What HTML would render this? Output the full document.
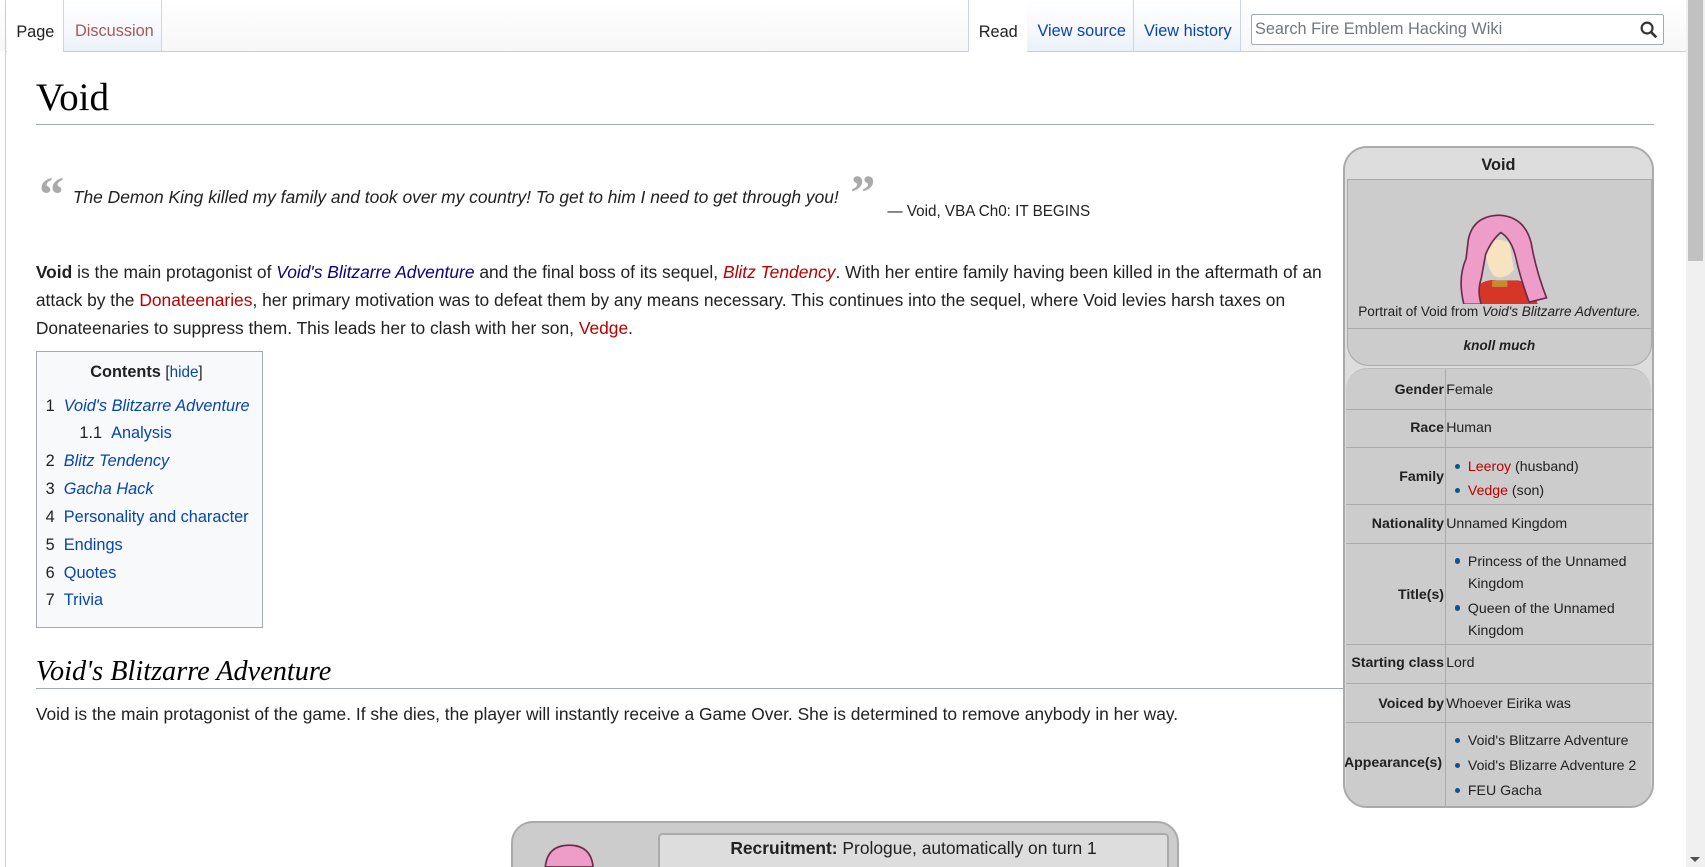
<!DOCTYPE html>
<html><head><meta charset="utf-8"><style>
html,body{margin:0;padding:0;background:#fff;overflow:hidden;width:1705px;height:867px}
#w{zoom:1.0875;position:relative;width:1568px;height:797px;font-family:"Liberation Sans",Arial,sans-serif;color:#202122}
.a{position:absolute;white-space:nowrap}
a{color:#0645ad;text-decoration:none}
.red{color:#ba0000}
.tab{position:absolute;top:0;height:47px;font-size:15px;background:linear-gradient(#fff,#f6f8fb 60%,#eaf1fa);border-right:1px solid #c8d6e8}
.tab span{position:absolute;bottom:9px}
.ib{position:absolute;font-size:13px}
.row{position:absolute;left:0;width:281px;border-top:1px solid #aaa}
.lab{position:absolute;left:0;width:90px;text-align:right;font-weight:bold}
.val{position:absolute;left:92px}
.vline{position:absolute;left:91px;top:0;bottom:0;border-left:1px solid #aaa}
.dot{display:inline-block;width:5px;height:5px;border-radius:50%;background:#0b5394;margin:0 7px 2px 8px}
</style></head><body><div id="w">
<div class="a" style="left:0;top:0;width:1550px;height:47px;background:linear-gradient(#fff,#f7f7f7)"></div>
<div class="a" style="left:5px;top:47px;width:1545px;border-top:1px solid #a7d7f9"></div>
<div class="a" style="left:5px;top:0;height:797px;border-left:1px solid #a7d7f9"></div>
<div class="a" style="left:6px;top:0;width:52px;height:48px;background:#fff"></div>
<div class="a" style="left:15px;top:21px;font-size:15px;color:#202122">Page</div>
<div class="tab" style="left:58px;width:89px;border-left:1px solid #c8d6e8;border-bottom:1px solid #a7d7f9"><span style="left:10px;color:#a55858">Discussion</span></div>
<div class="a" style="left:890px;top:0;width:53px;height:48px;background:#fff;border-left:1px solid #c8d6e8"></div>
<div class="a" style="left:900px;top:21px;font-size:15px">Read</div>
<div class="tab" style="left:944px;width:98px"><span style="left:10px;color:#0645ad">View source</span></div>
<div class="tab" style="left:1043px;width:97px"><span style="left:9px;color:#0645ad">View history</span></div>
<div class="a" style="left:1150px;top:13px;width:378px;height:27px;border:1px solid #a2a9b1;background:#fff;border-radius:2px"></div>
<div class="a" style="left:1154px;top:18px;font-size:15px;color:#72777d">Search Fire Emblem Hacking Wiki</div>
<svg class="a" style="left:1508px;top:19px" width="16" height="16" viewBox="0 0 16 16"><circle cx="6.5" cy="6.5" r="5" fill="none" stroke="#333" stroke-width="2"/><path d="M10 10l5 5" stroke="#333" stroke-width="2.4"/></svg>
<div class="a" style="left:1550px;top:0;width:18px;height:797px;background:#f0f0f0"></div>
<div class="a" style="left:1552px;top:0;width:14px;height:240px;background:#c1c1c1"></div>
<div class="a" style="left:1554px;top:788px;border:5px solid transparent;border-top:5px solid #505050;border-bottom:0"></div>

<div class="a" style="left:33px;top:69px;font-family:'Liberation Serif',serif;font-size:36px;color:#000">Void</div>
<div class="a" style="left:33px;top:114px;width:1488px;border-top:1px solid #a2a9b1"></div>

<div class="a" style="left:36px;top:152px;font-family:'Liberation Serif',serif;font-size:46px;color:#aaa;font-weight:bold">“</div>
<div class="a" style="left:67px;top:172px;font-size:16px;font-style:italic">The Demon King killed my family and took over my country! To get to him I need to get through you!</div>
<div class="a" style="left:782px;top:150px;font-family:'Liberation Serif',serif;font-size:46px;color:#aaa;font-weight:bold">”</div>
<div class="a" style="left:816px;top:187px;font-size:14px">— Void, VBA Ch0: IT BEGINS</div>

<div class="a" style="left:33px;top:238px;font-size:16px;line-height:25.6px;white-space:normal;width:1200px">
<b>Void</b> is the main protagonist of <a style="color:#0b0080;font-style:italic">Void's Blitzarre Adventure</a> and the final boss of its sequel, <a class="red" style="font-style:italic">Blitz Tendency</a>. With her entire family having been killed in the aftermath of an attack by the <a class="red">Donateenaries</a>, her primary motivation was to defeat them by any means necessary. This continues into the sequel, where Void levies harsh taxes on Donateenaries to suppress them. This leads her to clash with her son, <a class="red">Vedge</a>.</div>

<div class="a" style="left:33px;top:323px;width:207px;height:253px;background:#f8f9fa;border:1px solid #a2a9b1"></div>
<div class="a" style="left:83px;top:334px;font-size:15px"><b>Contents</b> <span style="font-size:14px">[<a>hide</a>]</span></div>
<div class="a" style="left:42px;top:361px;font-size:15px;line-height:25.6px">
1 &nbsp;<a style="font-style:italic">Void's Blitzarre Adventure</a><br>
<span style="margin-left:31px">1.1 &nbsp;<a>Analysis</a></span><br>
2 &nbsp;<a style="font-style:italic">Blitz Tendency</a><br>
3 &nbsp;<a style="font-style:italic">Gacha Hack</a><br>
4 &nbsp;<a>Personality and character</a><br>
5 &nbsp;<a>Endings</a><br>
6 &nbsp;<a>Quotes</a><br>
7 &nbsp;<a>Trivia</a></div>

<div class="a" style="left:33px;top:603px;font-family:'Liberation Serif',serif;font-size:26px;font-style:italic;color:#000">Void's Blitzarre Adventure</div>
<div class="a" style="left:33px;top:633px;width:1202px;border-top:1px solid #a2a9b1"></div>
<div class="a" style="left:33px;top:647px;font-size:16px">Void is the main protagonist of the game. If she dies, the player will instantly receive a Game Over. She is determined to remove anybody in her way.</div>

<!-- infobox -->
<div class="a" style="left:1235px;top:134px;width:282px;height:605px;border:2px solid #aaa;border-radius:22px;background:#ddd;overflow:hidden">
 <div class="ib" style="left:0;top:0;width:282px;height:29px;background:#ddd;text-align:center;line-height:32px;font-size:15px;font-weight:bold">Void</div>
 <div class="ib" style="left:2px;top:29px;width:278px;height:170px;background:#ccc;border:1px solid #aaa;border-top:1px solid #aaa;border-radius:0 0 20px 20px;text-align:center">
  <svg style="position:absolute;left:96px;top:30px" width="92" height="84" viewBox="0 0 92 84"><path d="M18 84 L18 70 Q30 60 40 62 L60 62 Q72 64 78 84Z" fill="#d63628"/><path d="M30 30 Q40 20 52 28 L56 52 Q48 62 38 58 Q30 50 30 30Z" fill="#f7e3c0"/><path d="M14 25 Q18 3 42 2 Q66 3 72 28 Q76 52 86 78 L70 82 Q62 60 58 42 Q54 24 44 18 Q36 24 30 38 L26 60 Q22 72 26 84 L10 84 Q4 60 12 42Z" fill="#ee9cc8" stroke="#6a2a4a" stroke-width="1.5"/><rect x="36" y="62" width="14" height="6" fill="#c88a30"/></svg>
  <div style="position:absolute;top:114px;width:100%;font-size:12.5px">Portrait of Void from <i>Void's Blitzarre Adventure.</i></div>
  <div style="position:absolute;top:136px;left:0;width:100%;border-top:1px solid #aaa"></div>
  <div style="position:absolute;top:145px;width:100%;font-size:12.5px;font-style:italic;font-weight:bold">knoll much</div>
 </div>
 <div class="ib" style="left:1px;top:203px;width:280px;height:404px;background:#ccc;border-top:1px solid #bbb;border-radius:20px 20px 0 0">
  <div class="vline" style="top:0"></div>
  <div class="lab" style="top:11px">Gender</div><div class="val" style="top:11px">Female</div>
  <div class="row" style="top:36px"></div>
  <div class="lab" style="top:46px">Race</div><div class="val" style="top:46px">Human</div>
  <div class="row" style="top:71px"></div>
  <div class="lab" style="top:91px">Family</div>
  <div class="val" style="top:79px;line-height:22px;left:92px"><span class="dot"></span><span class="red">Leeroy</span> (husband)<br><span class="dot"></span><span class="red">Vedge</span> (son)</div>
  <div class="row" style="top:124px"></div>
  <div class="lab" style="top:134px">Nationality</div><div class="val" style="top:134px">Unnamed Kingdom</div>
  <div class="row" style="top:160px"></div>
  <div class="lab" style="top:199px">Title(s)</div>
  <div class="val" style="top:166px;line-height:20.5px"><span class="dot"></span>Princess of the Unnamed<br><span style="margin-left:20px">Kingdom</span><br><div style="height:2px"></div><span class="dot"></span>Queen of the Unnamed<br><span style="margin-left:20px">Kingdom</span></div>
  <div class="row" style="top:252px"></div>
  <div class="lab" style="top:262px">Starting class</div><div class="val" style="top:262px">Lord</div>
  <div class="row" style="top:288px"></div>
  <div class="lab" style="top:299px">Voiced by</div><div class="val" style="top:299px">Whoever Eirika was</div>
  <div class="row" style="top:324px"></div>
  <div class="lab" style="top:354px;left:-2px">Appearance(s)</div>
  <div class="val" style="top:330px;line-height:23px"><span class="dot"></span>Void's Blitzarre Adventure<br><span class="dot"></span>Void's Blizarre Adventure 2<br><span class="dot"></span>FEU Gacha</div>
 </div>
</div>

<!-- recruitment -->
<div class="a" style="left:470px;top:755px;width:610px;height:60px;background:#ccc;border:2px solid #aaa;border-radius:20px"></div>
<div class="a" style="left:605px;top:766px;width:466px;height:40px;background:#ddd;border:2px solid #aaa;border-radius:4px"></div>
<div class="a" style="left:605px;top:771px;width:470px;text-align:center;font-size:16px"><b>Recruitment:</b> Prologue, automatically on turn 1</div>
<svg class="a" style="left:498px;top:775px" width="50" height="22"><path d="M3 22 Q5 2 25 2 Q45 2 47 22Z" fill="#ee9cc8" stroke="#6a2a4a" stroke-width="1.5"/></svg>
</div></body></html>
